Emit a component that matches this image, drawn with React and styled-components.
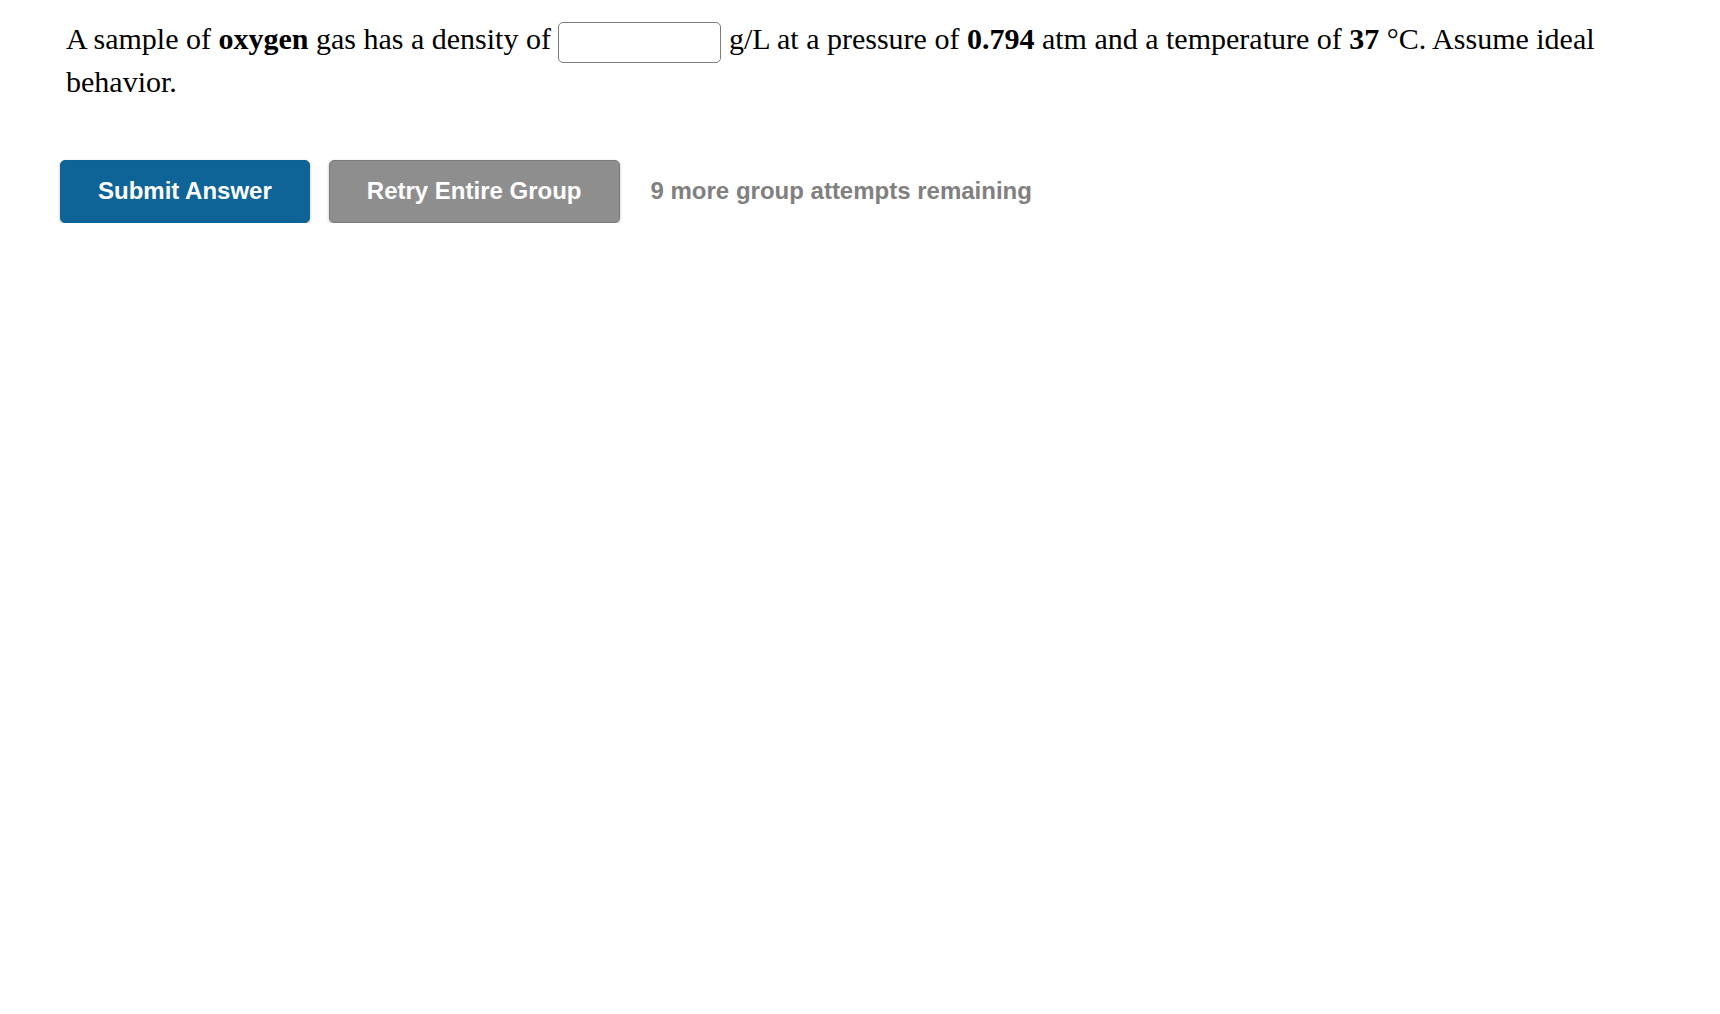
import styled, { createGlobalStyle } from "styled-components";

const GlobalStyle = createGlobalStyle`
  html, body {
    margin: 0;
    padding: 0;
    background: #ffffff;
  }
`;

const Page = styled.div`
  padding: 20px 60px 0 60px;
`;

const Question = styled.p`
  margin: 0 0 0 6px;
  font-family: "Liberation Serif", "Times New Roman", serif;
  font-size: 30px;
  line-height: 37px;
  color: #000;
`;

const AnswerInput = styled.input`
  box-sizing: border-box;
  width: 163px;
  height: 41px;
  margin: 0;
  padding: 0 8px;
  border: 1.5px solid #7c7c7c;
  border-radius: 5px;
  background: #fff;
  vertical-align: middle;
  font-family: "Liberation Serif", serif;
  font-size: 26px;
  outline: none;
`;

const Actions = styled.div`
  display: flex;
  align-items: center;
  gap: 19px;
  margin-top: 60px;
`;

const Button = styled.button`
  box-sizing: border-box;
  height: 63px;
  padding: 0 37px;
  border-radius: 5px;
  border: 1.5px solid ${(p) => (p.$variant === "primary" ? "#0e6396" : "#7b7b7b")};
  background: ${(p) => (p.$variant === "primary" ? "#0f6497" : "#8e8e8e")};
  color: #ffffff;
  font-family: "Liberation Sans", Arial, sans-serif;
  font-weight: 700;
  font-size: 24px;
  box-shadow: 0 1.5px 3px rgba(0, 0, 0, 0.25);
  cursor: pointer;
`;

const Attempts = styled.span`
  margin-left: 12px;
  font-family: "Liberation Sans", Arial, sans-serif;
  font-weight: 700;
  font-size: 24px;
  color: #808080;
`;

export default function App() {
  return (
    <>
      <GlobalStyle />
      <Page>
        <Question>
          A sample of <b>oxygen</b> gas has a density of{" "}
          <AnswerInput type="text" aria-label="density" />{" "}
          g/L at a pressure of <b>0.794</b> atm and a temperature of <b>37</b> °C. Assume ideal
          behavior.
        </Question>
        <Actions>
          <Button $variant="primary">Submit Answer</Button>
          <Button $variant="secondary">Retry Entire Group</Button>
          <Attempts>9 more group attempts remaining</Attempts>
        </Actions>
      </Page>
    </>
  );
}
